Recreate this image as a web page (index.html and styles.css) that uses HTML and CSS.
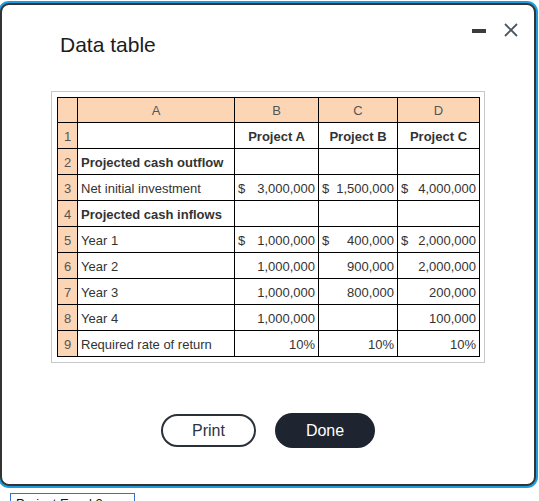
FILE: index.html
```html
<!DOCTYPE html>
<html lang="en">
<head>
<meta charset="utf-8">
<title>Data table</title>
<link rel="stylesheet" href="styles.css">
</head>
<body>
<div class="dialog">
  <div class="dialog-header">
    <h1 class="title">Data table</h1>
    <div class="window-controls">
      <svg class="ctl" width="14" height="14" viewBox="0 0 14 14" aria-label="Minimize"><rect x="0" y="6" width="14" height="4" fill="#3c3c3c"/></svg>
      <svg class="ctl" width="14" height="14" viewBox="0 0 14 14" aria-label="Close"><path d="M1 1 L13 13 M13 1 L1 13" stroke="#4b5560" stroke-width="1.8" fill="none"/></svg>
    </div>
  </div>

  <div class="table-frame">
    <div class="sheet">
      <div class="cell hd"></div>
      <div class="cell hd">A</div>
      <div class="cell hd">B</div>
      <div class="cell hd">C</div>
      <div class="cell hd">D</div>

      <div class="cell rn">1</div>
      <div class="cell"></div>
      <div class="cell b ctr">Project A</div>
      <div class="cell b ctr">Project B</div>
      <div class="cell b ctr">Project C</div>

      <div class="cell rn">2</div>
      <div class="cell b">Projected cash outflow</div>
      <div class="cell"></div>
      <div class="cell"></div>
      <div class="cell"></div>

      <div class="cell rn">3</div>
      <div class="cell">Net initial investment</div>
      <div class="cell num"><span>$</span><span>3,000,000</span></div>
      <div class="cell num"><span>$</span><span>1,500,000</span></div>
      <div class="cell num"><span>$</span><span>4,000,000</span></div>

      <div class="cell rn">4</div>
      <div class="cell b">Projected cash inflows</div>
      <div class="cell"></div>
      <div class="cell"></div>
      <div class="cell"></div>

      <div class="cell rn">5</div>
      <div class="cell">Year 1</div>
      <div class="cell num"><span>$</span><span>1,000,000</span></div>
      <div class="cell num"><span>$</span><span>400,000</span></div>
      <div class="cell num"><span>$</span><span>2,000,000</span></div>

      <div class="cell rn">6</div>
      <div class="cell">Year 2</div>
      <div class="cell right">1,000,000</div>
      <div class="cell right">900,000</div>
      <div class="cell right">2,000,000</div>

      <div class="cell rn">7</div>
      <div class="cell">Year 3</div>
      <div class="cell right">1,000,000</div>
      <div class="cell right">800,000</div>
      <div class="cell right">200,000</div>

      <div class="cell rn">8</div>
      <div class="cell">Year 4</div>
      <div class="cell right">1,000,000</div>
      <div class="cell right"></div>
      <div class="cell right">100,000</div>

      <div class="cell rn">9</div>
      <div class="cell">Required rate of return</div>
      <div class="cell right">10%</div>
      <div class="cell right">10%</div>
      <div class="cell right">10%</div>
    </div>
  </div>

  <div class="actions">
    <button class="btn btn-outline" type="button">Print</button>
    <button class="btn btn-solid" type="button">Done</button>
  </div>
</div>
<div class="task-item">Project Excel 2</div>
</body>
</html>
```

FILE: styles.css
```css
html, body {
  margin: 0;
  padding: 0;
  background: #ffffff;
}

body {
  padding-top: 3px;
  font-family: "Liberation Sans", Arial, sans-serif;
  overflow: hidden;
}

.dialog {
  box-sizing: border-box;
  width: 536px;
  height: 483px;
  border: 2px solid #333333;
  border-radius: 9px;
  box-shadow: 0 0 0 2px #1f9be0;
  background: #ffffff;
}

.dialog-header {
  display: flex;
  justify-content: space-between;
  align-items: flex-start;
  padding: 18px 16px 0 58px;
}

.title {
  margin: 10px 0 0 0;
  font-size: 21px;
  line-height: 24px;
  font-weight: normal;
  color: #1c1c1c;
}

.window-controls {
  display: flex;
  align-items: center;
  gap: 18px;
}

.ctl {
  display: block;
}

.table-frame {
  box-sizing: border-box;
  width: 434px;
  margin: 34px 0 0 49px;
  padding: 5px 4px 5px 5px;
  border: 1px solid #c8c8c8;
}

.sheet {
  display: grid;
  grid-template-columns: 20px 157px 84px 79px 82px;
  grid-template-rows: 25px;
  grid-auto-rows: 26px;
  width: 423px;
  box-sizing: border-box;
  border-left: 1px solid #000000;
  border-top: 1px solid #000000;
}

.cell {
  box-sizing: border-box;
  border-right: 1px solid #000000;
  border-bottom: 1px solid #000000;
  display: flex;
  align-items: center;
  padding: 2px 3px 0;
  font-size: 13px;
  color: #333333;
  white-space: nowrap;
  overflow: hidden;
}

.hd {
  background: #fcd5b5;
  justify-content: center;
  color: #555555;
  padding-top: 0;
}

.rn {
  background: #fcd5b5;
  justify-content: center;
  padding: 2px 0 0;
  color: #555555;
}

.b {
  font-weight: bold;
}

.ctr {
  justify-content: center;
}

.num {
  justify-content: space-between;
}

.right {
  justify-content: flex-end;
}

.actions {
  display: flex;
  justify-content: center;
  align-items: center;
  gap: 19px;
  margin-top: 50px;
  height: 35px;
}

.btn {
  box-sizing: border-box;
  font-family: "Liberation Sans", Arial, sans-serif;
  font-size: 16px;
  cursor: pointer;
}

.btn-outline {
  width: 95px;
  height: 33px;
  border: 2px solid #2b3139;
  border-radius: 17px;
  background: #ffffff;
  color: #2b3440;
}

.btn-solid {
  width: 100px;
  height: 35px;
  border: none;
  border-radius: 18px;
  background: #1e2430;
  color: #ffffff;
}

.task-item {
  box-sizing: border-box;
  width: 125px;
  height: 22px;
  margin: 7px 0 0 10px;
  padding: 2px 5px 0;
  border: 1px solid #3a6fd0;
  font-size: 13px;
  line-height: 16px;
  color: #111111;
  white-space: nowrap;
  overflow: hidden;
}
```
